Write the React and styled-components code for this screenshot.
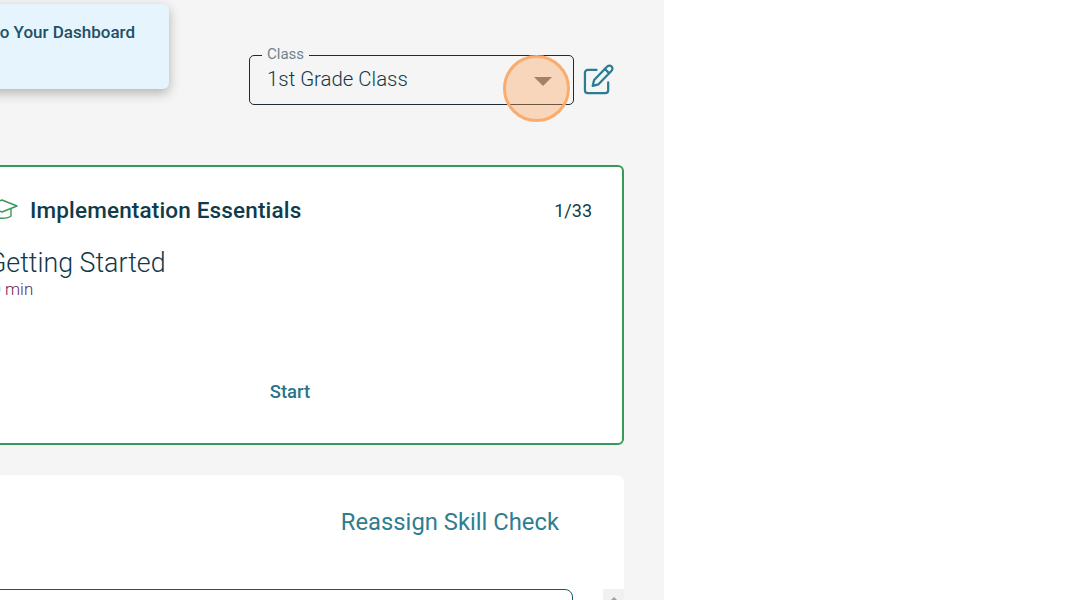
import styled, { createGlobalStyle } from "styled-components";

const GlobalStyle = createGlobalStyle`
  html, body { margin: 0; padding: 0; background: #fff; }
  body { font-family: "Roboto", "Liberation Sans", sans-serif; overflow: hidden; }
  * { box-sizing: border-box; }
`;

const Page = styled.div`
  width: 1075px;
  height: 600px;
  background: #fff;
  overflow: hidden;
`;

const Main = styled.main`
  position: relative;
  width: 664px;
  height: 600px;
  background: #f5f5f5;
  overflow: hidden;
`;

// the page is scrolled sideways in the shot, so the column starts off screen
const Column = styled.div`
  width: 668px;
  margin-left: -44px;
  display: flex;
  flex-direction: column;
`;

const Toast = styled.div`
  position: absolute;
  top: 4px;
  left: -131px;
  width: 300px;
  height: 85px;
  padding: 18px 34px 0 0;
  background: #e5f4fd;
  border-radius: 6px;
  box-shadow: 0 4px 12px rgba(0, 0, 0, 0.28);
  color: #1f5068;
  font-size: 17px;
  font-weight: 500;
  line-height: 20px;
  text-align: right;
  white-space: nowrap;
`;

const Toolbar = styled.div`
  height: 165px;
  padding: 47px 10px 0 293px;
  display: flex;
  align-items: flex-start;
  gap: 9px;
`;

const SelectBox = styled.fieldset`
  flex: 0 0 325px;
  height: 58px;
  margin: 0;
  padding: 0 0 0 12px;
  border: 1px solid #1d2b33;
  border-radius: 5px;
  display: flex;
  align-items: center;
  justify-content: space-between;
`;

const SelectLabel = styled.legend`
  padding: 0 5px 3px;
  color: #6d8490;
  font-size: 15px;
  line-height: 14px;
`;

const SelectValue = styled.span`
  margin: -10px 0 0 5px;
  color: #12384a;
  font-size: 20.4px;
  font-weight: 300;
  line-height: 24px;
`;

const Caret = styled.span`
  width: 0;
  height: 0;
  margin: -6px 21px 0 0;
  border-left: 9px solid transparent;
  border-right: 9px solid transparent;
  border-top: 9px solid #6f6f6f;
`;

const EditButton = styled.span`
  display: flex;
  margin-top: 17px;
  color: #2a7d90;
`;

const Highlight = styled.div`
  position: absolute;
  top: 55px;
  left: 503px;
  width: 67px;
  height: 67px;
  border-radius: 50%;
  background: rgba(255, 160, 85, 0.36);
  border: 3px solid #fbac6d;
`;

const LessonCard = styled.section`
  height: 280px;
  padding: 28px 30px 0;
  background: #fff;
  border: 2px solid #379a56;
  border-radius: 6px;
  display: flex;
  flex-direction: column;
`;

const CardHeader = styled.div`
  height: 30px;
  display: flex;
  align-items: center;
  color: #0f3c4c;
`;

const CapIcon = styled.span`
  display: flex;
  width: 45px;
  margin-left: -3px;
  color: #379a56;
`;

const CardTitle = styled.h2`
  flex: 1;
  margin: 0;
  font-size: 22.5px;
  font-weight: 500;
  letter-spacing: 0.16px;
`;

const Count = styled.span`
  font-size: 18px;
`;

const LessonName = styled.div`
  margin-top: 23px;
  color: #12384a;
  font-size: 26.8px;
  font-weight: 300;
  line-height: 30px;
`;

const Duration = styled.div`
  margin-left: -6px;
  color: #5f2a58;
  font-size: 17px;
  font-weight: 300;
  line-height: 22px;
`;

const StartLink = styled.a`
  margin-top: 81px;
  align-self: center;
  color: #2a7389;
  font-size: 18.5px;
  font-weight: 500;
  line-height: 22px;
`;

const SkillCard = styled.section`
  margin-top: 30px;
  height: 200px;
  background: #fff;
  border-radius: 8px 8px 0 0;
`;

const SkillHeader = styled.div`
  height: 114px;
  padding: 30px 65px 0 0;
  text-align: right;
  color: #2f7d90;
  font-size: 23.8px;
  line-height: 34px;
`;

const SkillBody = styled.div`
  display: flex;
  justify-content: space-between;
`;

const SkillTable = styled.div`
  width: 617px;
  height: 80px;
  border: 1px solid #1d5468;
  border-radius: 8px;
`;

const ScrollTrack = styled.div`
  width: 21px;
  height: 80px;
  padding-top: 8px;
  background: #f1f1f1;
  display: flex;
  justify-content: center;
`;

const ScrollArrow = styled.span`
  width: 0;
  height: 0;
  border-left: 3px solid transparent;
  border-right: 3px solid transparent;
  border-bottom: 3px solid #a0a0a0;
`;

export default function App() {
  return (
    <Page>
      <GlobalStyle />
      <Main>
        <Column>
          <Toolbar>
            <SelectBox>
              <SelectLabel>Class</SelectLabel>
              <SelectValue>1st Grade Class</SelectValue>
              <Caret />
            </SelectBox>
            <EditButton>
              <svg width="31" height="31" viewBox="0 0 32 32" fill="none" stroke="currentColor" strokeWidth="2.3" strokeLinecap="round" strokeLinejoin="round">
                <path d="M14 6H5a3 3 0 0 0-3 3v18a3 3 0 0 0 3 3h18a3 3 0 0 0 3-3v-8" />
                <path d="M25 2.5a2.9 2.9 0 0 1 4.5 4.5L16 21l-6 1.5 1.5-6Z" />
                <path d="M22.5 5l4.5 4.5" />
              </svg>
            </EditButton>
          </Toolbar>
          <LessonCard>
            <CardHeader>
              <CapIcon>
                <svg width="34" height="26" viewBox="0 0 34 26" fill="none" stroke="currentColor" strokeWidth="1.4" strokeLinejoin="round">
                  <path d="M17 3 32 9 17 15 2 9Z" />
                  <path d="M8 12v7c3 3 15 3 18 0v-7" />
                </svg>
              </CapIcon>
              <CardTitle>Implementation Essentials</CardTitle>
              <Count>1/33</Count>
            </CardHeader>
            <LessonName>Getting Started</LessonName>
            <Duration>10 min</Duration>
            <StartLink>Start</StartLink>
          </LessonCard>
          <SkillCard>
            <SkillHeader>Reassign Skill Check</SkillHeader>
            <SkillBody>
              <SkillTable />
              <ScrollTrack>
                <ScrollArrow />
              </ScrollTrack>
            </SkillBody>
          </SkillCard>
        </Column>
        <Toast>Welcome to Your Dashboard</Toast>
        <Highlight />
      </Main>
    </Page>
  );
}
